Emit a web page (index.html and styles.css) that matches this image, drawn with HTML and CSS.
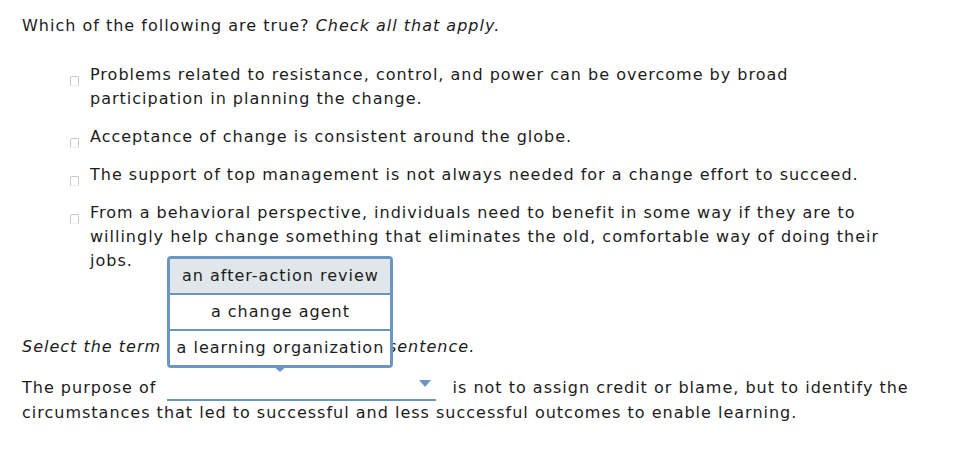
FILE: index.html
```
<!DOCTYPE html>
<html>
<head>
<meta charset="utf-8">
<link rel="stylesheet" href="styles.css">
</head>
<body>
<div class="page">
  <p class="prompt">Which of the following are true? <em>Check all that apply.</em></p>
  <ul class="choices">
    <li class="choice"><span class="box"></span><span class="label">Problems related to resistance, control, and power can be overcome by broad participation in planning the change.</span></li>
    <li class="choice"><span class="box"></span><span class="label">Acceptance of change is consistent around the globe.</span></li>
    <li class="choice"><span class="box"></span><span class="label">The support of top management is not always needed for a change effort to succeed.</span></li>
    <li class="choice"><span class="box"></span><span class="label">From a behavioral perspective, individuals need to benefit in some way if they are to willingly help change something that eliminates the old, comfortable way of doing their jobs.</span></li>
  </ul>
  <p class="instr"><em>Select the term that best completes the sentence.</em></p>
  <p class="sentence">The purpose of <span class="select"><span class="caret"></span><span class="menu"><span class="opt hover">an after-action review</span><span class="opt">a change agent</span><span class="opt">a learning organization</span></span></span> is not to assign credit or blame, but to identify the circumstances that led to successful and less successful outcomes to enable learning.</p>
</div>
</body>
</html>
```
FILE: styles.css
```
html, body { margin: 0; padding: 0; background: #fff; }
body {
  font-family: "DejaVu Sans", Verdana, sans-serif;
  font-size: 16px;
  line-height: 24px;
  letter-spacing: 1px;
  color: #1c1c1c;
}
.page { padding: 14px 24px 0 22px; }
p { margin: 0; }
.prompt { margin-bottom: 25px; }
.choices {
  list-style: none;
  margin: 0;
  padding: 0 0 0 48px;
  width: 825px;
  display: flex;
  flex-direction: column;
  gap: 14px;
}
.choice { display: flex; gap: 11px; }
.box {
  flex: none;
  width: 7px;
  height: 8px;
  margin-top: 13px;
  border: 1px solid #c9c9c9;
  border-bottom-color: #f0f0f0;
  border-radius: 2px 2px 0 0;
}
.label { flex: 1; }
.instr { margin-top: 62px; }
.sentence { margin-top: 17px; }
.select {
  position: relative;
  display: inline-block;
  vertical-align: top;
  width: 269px;
  height: 23px;
  margin: 0 10px 0 5px;
  border-bottom: 2px solid #6b95c3;
}
.caret {
  position: absolute;
  right: 5px;
  top: 4px;
  width: 0;
  height: 0;
  border-left: 6px solid transparent;
  border-right: 6px solid transparent;
  border-top: 7px solid #6b95c3;
}
.menu {
  position: absolute;
  left: 0;
  bottom: calc(100% + 8px);
  width: 220px;
  display: flex;
  flex-direction: column;
  gap: 2px;
  background: #6b95c3;
  border: 3px solid #6b95c3;
  border-radius: 4px;
}
.menu::after {
  content: "";
  position: absolute;
  left: 50%;
  top: 100%;
  margin-left: -8px;
  border-left: 8px solid transparent;
  border-right: 8px solid transparent;
  border-top: 7px solid #6b95c3;
}
.opt {
  display: block;
  height: 34px;
  line-height: 34px;
  text-align: center;
  background: #fff;
  white-space: nowrap;
}
.opt.hover { background: #e0e6e9; }
```
